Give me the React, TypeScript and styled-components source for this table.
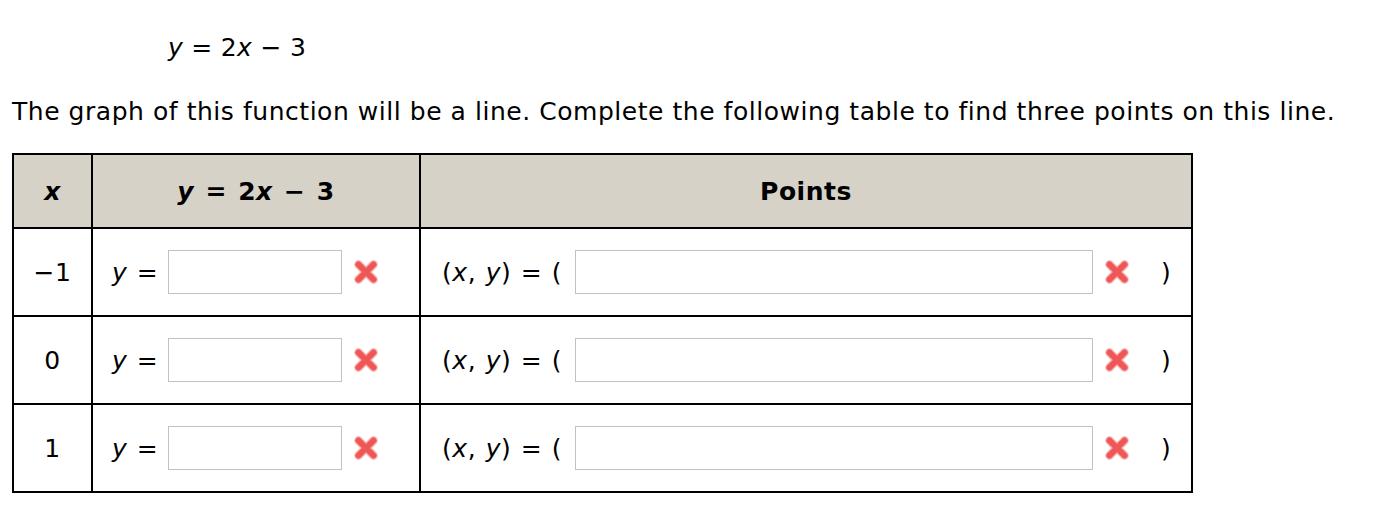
import React from "react";
import styled, { createGlobalStyle } from "styled-components";

const GlobalStyle = createGlobalStyle`
  body {
    margin: 0;
    background: #fff;
    color: #000;
    font-family: "DejaVu Sans", Verdana, sans-serif;
  }
`;

const Page = styled.div`
  padding: 33px 0 0 12px;
  font-size: 25px;
  letter-spacing: 0.54px;
`;

const Equation = styled.div`
  padding-left: 156px;
  line-height: 30px;
  letter-spacing: 0.3px;
`;

const Intro = styled.p`
  margin: 34px 0 0;
  line-height: 30px;
`;

const Table = styled.table`
  margin-top: 26px;
  border-collapse: collapse;
  table-layout: fixed;
  width: 1173px;
`;

const HeadCell = styled.th<{ w: number }>`
  width: ${(p) => p.w}px;
  height: 72px;
  padding: 0;
  background: #d6d2c7;
  border: 2px solid #000;
  font-weight: bold;
  text-align: center;
  word-spacing: 2px;
`;

const XCell = styled.td`
  height: 86px;
  padding: 0;
  border: 2px solid #000;
  text-align: center;
`;

const Cell = styled.td<{ pad: number }>`
  height: 86px;
  padding: 0 0 0 ${(p) => p.pad}px;
  border: 2px solid #000;
`;

const Row = styled.div`
  display: flex;
  align-items: center;
`;

const Label = styled.span<{ gap: number }>`
  margin-right: ${(p) => p.gap}px;
  white-space: nowrap;
  word-spacing: 1px;
`;

const Answer = styled.input<{ w: number }>`
  width: ${(p) => p.w}px;
  height: 44px;
  box-sizing: border-box;
  border: 1px solid #c2c2c2;
  background: #fff;
  margin: 0;
`;

const Mark = styled.svg`
  margin-left: 10px;
  flex: none;
`;

const Close = styled.span`
  margin-left: 30px;
`;

const Minus = "\u2212";

const Cross = () => (
  <Mark width="28" height="28" viewBox="0 0 28 28">
    <g strokeLinecap="round">
      <path d="M6.5 6.5 L21.5 21.5 M21.5 6.5 L6.5 21.5" stroke="#f8b0b0" strokeWidth="8.5" />
      <path d="M6.5 6.5 L21.5 21.5 M21.5 6.5 L6.5 21.5" stroke="#ef5757" strokeWidth="6" />
    </g>
  </Mark>
);

const rows = [`${Minus}1`, "0", "1"];

export default function App() {
  return (
    <Page>
      <GlobalStyle />
      <Equation>
        <i>y</i> = 2<i>x</i> {Minus} 3
      </Equation>
      <Intro>
        The graph of this function will be a line. Complete the following table to find three
        points on this line.
      </Intro>
      <Table>
        <thead>
          <tr>
            <HeadCell w={77}>
              <i>x</i>
            </HeadCell>
            <HeadCell w={326}>
              <i>y</i> = 2<i>x</i> {Minus} 3
            </HeadCell>
            <HeadCell w={770}>Points</HeadCell>
          </tr>
        </thead>
        <tbody>
          {rows.map((x) => (
            <tr key={x}>
              <XCell>{x}</XCell>
              <Cell pad={19}>
                <Row>
                  <Label gap={10}>
                    <i>y</i> =
                  </Label>
                  <Answer w={174} />
                  <Cross />
                </Row>
              </Cell>
              <Cell pad={21}>
                <Row>
                  <Label gap={13}>
                    (<i>x</i>, <i>y</i>) = (
                  </Label>
                  <Answer w={518} />
                  <Cross />
                  <Close>)</Close>
                </Row>
              </Cell>
            </tr>
          ))}
        </tbody>
      </Table>
    </Page>
  );
}
